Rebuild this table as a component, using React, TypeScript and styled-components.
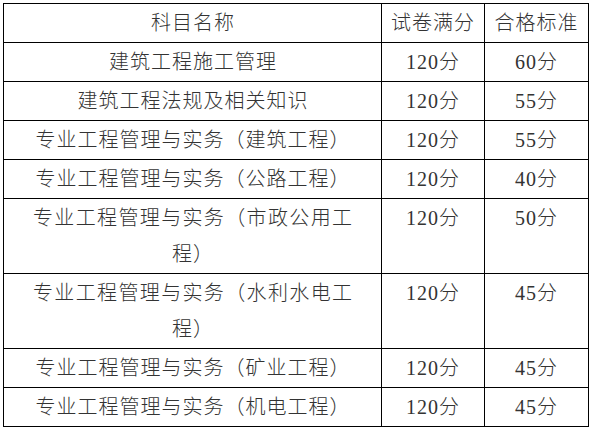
import React from "react";
import styled, { createGlobalStyle } from "styled-components";

const GlobalStyle = createGlobalStyle`
  body {
    margin: 3px;
    background: #fff;
    font-family: "Liberation Serif", "Noto Sans CJK SC", serif;
  }
`;

const Table = styled.table`
  border-collapse: collapse;
  table-layout: fixed;
  width: 586px;
  color: #333;
  font-size: 20px;
  letter-spacing: 1px;
  font-weight: 300;
`;

const Cell = styled.td<{ $subject?: boolean }>`
  border: 1px solid #000;
  line-height: 36px;
  padding: ${({ $subject }) => ($subject ? "1px 28px 1px 29px" : "1px 0")};
  vertical-align: top;
  text-align: ${({ $subject }) => ($subject ? "justify" : "center")};
  text-align-last: center;
`;

type Row = { name: string; full: string; pass: string };

const rows: Row[] = [
  { name: "建筑工程施工管理", full: "120分", pass: "60分" },
  { name: "建筑工程法规及相关知识", full: "120分", pass: "55分" },
  { name: "专业工程管理与实务（建筑工程）", full: "120分", pass: "55分" },
  { name: "专业工程管理与实务（公路工程）", full: "120分", pass: "40分" },
  { name: "专业工程管理与实务（市政公用工程）", full: "120分", pass: "50分" },
  { name: "专业工程管理与实务（水利水电工程）", full: "120分", pass: "45分" },
  { name: "专业工程管理与实务（矿业工程）", full: "120分", pass: "45分" },
  { name: "专业工程管理与实务（机电工程）", full: "120分", pass: "45分" },
];

const App = () => {
  return (
    <>
      <GlobalStyle />
      <Table>
        <colgroup>
          <col style={{ width: 378 }} />
          <col style={{ width: 103 }} />
          <col style={{ width: 104 }} />
        </colgroup>
        <tbody>
          <tr>
            <Cell $subject>科目名称</Cell>
            <Cell>试卷满分</Cell>
            <Cell>合格标准</Cell>
          </tr>
          {rows.map((r) => (
            <tr key={r.name}>
              <Cell $subject>{r.name}</Cell>
              <Cell>{r.full}</Cell>
              <Cell>{r.pass}</Cell>
            </tr>
          ))}
        </tbody>
      </Table>
    </>
  );
};

export default App;
